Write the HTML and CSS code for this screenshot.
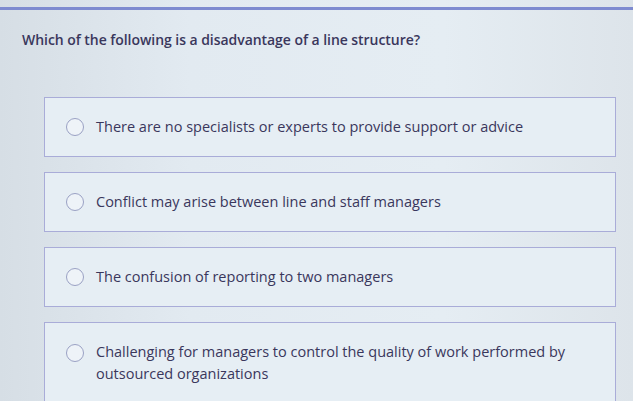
FILE: index.html
```html
<!DOCTYPE html>
<html lang="en">
<head>
<meta charset="utf-8">
<title>Question</title>
<link rel="stylesheet" href="styles.css">
</head>
<body>
<div class="page">
  <div class="topbar"></div>
  <p class="question">Which of the following is a disadvantage of a line structure?</p>
  <div class="options">
    <label class="option"><span class="radio"></span><span class="text">There are no specialists or experts to provide support or advice</span></label>
    <label class="option"><span class="radio"></span><span class="text">Conflict may arise between line and staff managers</span></label>
    <label class="option"><span class="radio"></span><span class="text">The confusion of reporting to two managers</span></label>
    <label class="option tall"><span class="radio"></span><span class="text">Challenging for managers to control the quality of work performed by outsourced organizations</span></label>
  </div>
</div>
</body>
</html>
```
FILE: styles.css
```css
html, body {
  margin: 0;
  padding: 0;
}
body {
  width: 633px;
  height: 401px;
  overflow: hidden;
  background: linear-gradient(90deg, #d6dee5 0%, #e2eaf1 30%, #e5edf3 70%, #dde4ea 100%);
  font-family: "Open Sans", "Liberation Sans", sans-serif;
  color: #3a375c;
}
.page {
  display: flex;
  flex-direction: column;
}
.topbar {
  margin-top: 7px;
  height: 3px;
  background: #7e8bd0;
}
.question {
  margin: 20px 0 0 22px;
  font-size: 14px;
  line-height: 20px;
  font-weight: 600;
  letter-spacing: -0.05px;
}
.options {
  display: flex;
  flex-direction: column;
  gap: 15px;
  margin: 47px 17px 0 44px;
}
.option {
  display: flex;
  align-items: center;
  gap: 12px;
  height: 60px;
  padding: 0 21px;
  border: 1.5px solid #a9acd8;
  background: #e6eef4;
  box-sizing: border-box;
  font-size: 14.5px;
  line-height: 22px;
  font-weight: 500;
}
.option.tall {
  height: 84px;
  align-items: flex-start;
  padding-top: 18px;
}
.option.tall .radio {
  margin-top: 3px;
}
.radio {
  flex: none;
  width: 18px;
  height: 18px;
  border: 1.5px solid #9aa1c4;
  border-radius: 50%;
  background: #eef3f8;
  box-sizing: border-box;
}
.text {
  flex: 1;
}
```
